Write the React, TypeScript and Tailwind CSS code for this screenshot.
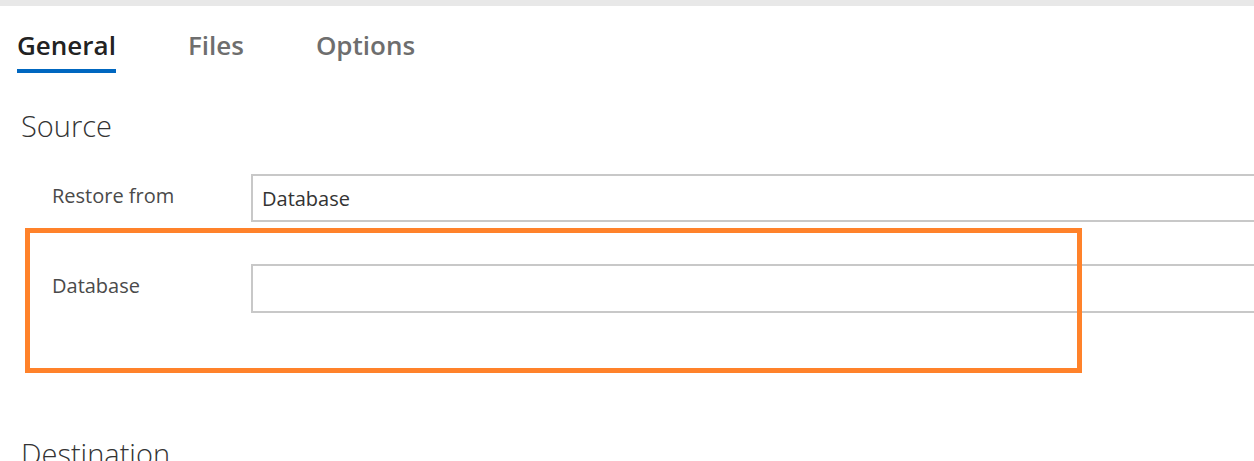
import React from "react";

export default function App() {
  return (
    <div
      className="relative w-[1254px] h-[461px] overflow-hidden bg-white"
      style={{ fontFamily: '"Open Sans", "Noto Sans", sans-serif' }}
    >
      <div className="h-[6px] bg-[#e8e8e8]" />
      <div className="flex gap-[72px] pl-[17px] pt-[21px]">
        <div className="flex flex-col">
          <span className="text-[26px] leading-[36px] font-semibold text-[#222222]">General</span>
          <span className="mt-[6px] h-[4px] bg-[#0067c0]" />
        </div>
        <span className="text-[26px] leading-[36px] font-semibold text-[#6e6e6e]">Files</span>
        <span className="text-[26px] leading-[36px] font-semibold text-[#6e6e6e]">Options</span>
      </div>
      <div className="pl-[21px] pt-[35px]">
        <div className="text-[29px] leading-[36px] font-light text-[#333333]">Source</div>
      </div>
      <div className="flex flex-col gap-[42px] pt-[30px]">
        <div className="flex items-start">
          <div className="w-[251px] shrink-0 pl-[52px] pt-[8px] text-[20px] leading-[28px] text-[#4a4a4a]">
            Restore from
          </div>
          <div className="w-[1040px] shrink-0 h-[48px] border-2 border-[#c8c8c8] flex items-center pl-[9px] pt-[2px] text-[20px] text-[#333333]">
            Database
          </div>
        </div>
        <div className="flex items-start">
          <div className="w-[251px] shrink-0 pl-[52px] pt-[8px] text-[20px] leading-[28px] text-[#4a4a4a]">
            Database
          </div>
          <div className="w-[1040px] shrink-0 h-[49px] border-2 border-[#c8c8c8]" />
        </div>
      </div>
      <div className="pl-[21px] pt-[123px]">
        <div className="text-[29px] leading-[36px] font-light text-[#333333]">Destination</div>
      </div>
      <div className="absolute left-[25px] top-[228px] w-[1057px] h-[145px] border-[5px] border-[#ff822a]" />
    </div>
  );
}
